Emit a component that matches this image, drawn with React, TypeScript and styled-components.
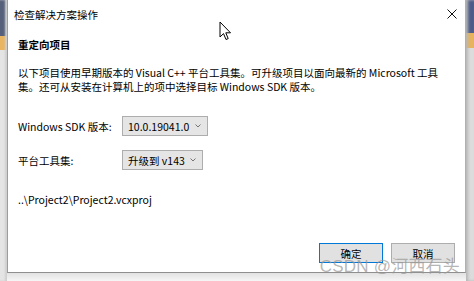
import React from 'react'
import styled, { createGlobalStyle } from 'styled-components'

const GlobalStyle = createGlobalStyle`
  html, body {
    margin: 0;
    padding: 0;
    background: #f2f2f2;
  }
  body {
    font-family: "Noto Sans CJK SC", "Noto Sans", sans-serif;
    color: #000;
  }
`

const Screen = styled('div')`
  position: relative;
  width: 474px;
  height: 281px;
  overflow: hidden;
  display: grid;
  grid-template-columns: 7px 459px 8px;
  grid-template-rows: 273px 8px;
  background: #f4f4f4;
`

const Strip = styled('div')<{ $side: 'left' | 'right' }>`
  grid-row: 1 / span 2;
  grid-column: ${(p) => (p.$side === 'left' ? 1 : 3)};
  background: ${(p) =>
    p.$side === 'left'
      ? 'linear-gradient(#56607a 0 36px, #e9b562 36px 50px, #e4e4e4 50px)'
      : 'linear-gradient(#4d5b88 0 33px, #e7b35c 33px 48px, #dcdcdc 48px)'};
  box-shadow: ${(p) =>
    p.$side === 'left' ? 'inset -2px 0 2px #cfcfcf' : 'inset 2px 0 3px #b8b8b8'};
`

const Dialog = styled('div')`
  grid-row: 1;
  grid-column: 2;
  min-width: 0;
  background: #fff;
  border-left: 1px solid #9c9c9c;
  border-right: 1px solid #b0b0b0;
  border-bottom: 1px solid #8f8f8f;
  display: flex;
  flex-direction: column;
  box-sizing: border-box;
`

const Shadow = styled('div')`
  grid-row: 2;
  grid-column: 2;
  background: linear-gradient(#e2e2e2, #f6f6f6);
`

const TitleBar = styled('div')`
  height: 28px;
  display: flex;
  align-items: center;
  justify-content: space-between;
  padding: 0 8px 0 6px;
  font-size: 10.5px;
`

const Body = styled('div')`
  flex: 1;
  display: flex;
  flex-direction: column;
  padding: 0 10px;
  font-size: 10.5px;
`

const Heading = styled('div')`
  margin-top: 9px;
  font-weight: 700;
  font-size: 10.5px;
  line-height: 16px;
`

const Paragraph = styled('p')`
  margin: 13px 0 0 0;
  line-height: 14px;
  white-space: nowrap;
`

const FieldRow = styled('div')<{ $top: number }>`
  margin-top: ${(p) => p.$top}px;
  display: flex;
  align-items: center;
`

const Label = styled('div')`
  width: 104px;
`

const Select = styled('div')<{ $width: number }>`
  width: ${(p) => p.$width}px;
  height: 20px;
  box-sizing: border-box;
  display: flex;
  align-items: center;
  justify-content: space-between;
  padding: 0 6px 0 5px;
  background: #e5e5e5;
  border: 1px solid #adadad;
  font-size: 10.5px;
`

const Chevron = styled('svg')`
  width: 6px;
  height: 4px;
`

const PathText = styled('div')`
  margin-top: 23px;
  line-height: 14px;
`

const Footer = styled('div')`
  margin-top: auto;
  padding-bottom: 9px;
  display: flex;
  justify-content: flex-end;
  gap: 8px;
`

const Button = styled('button')<{ $primary?: boolean }>`
  width: 64px;
  height: 20px;
  padding: 0;
  font-family: inherit;
  font-size: 10.5px;
  background: #e1e1e1;
  border: 1px solid ${(p) => (p.$primary ? '#0078d7' : '#adadad')};
  color: #000;
`

const Watermark = styled('div')`
  position: absolute;
  right: 14px;
  top: 252px;
  font-family: "Liberation Sans", "Noto Sans CJK SC", sans-serif;
  font-size: 17px;
  color: rgba(150, 150, 150, 0.7);
  letter-spacing: 0.2px;
`

const Cursor = styled('svg')`
  position: absolute;
  left: 219px;
  top: 21px;
  width: 13px;
  height: 20px;
`

function ChevronIcon() {
  return (
    <Chevron viewBox="0 0 6 4">
      <path d="M0.5 0.5 L3 3 L5.5 0.5" fill="none" stroke="#666" strokeWidth="0.9" />
    </Chevron>
  )
}

export default function App() {
  return (
    <Screen>
      <GlobalStyle />
      <Strip $side="left" />
      <Dialog>
        <TitleBar>
          <span>检查解决方案操作</span>
          <svg width="10" height="10" viewBox="0 0 10 10">
            <path d="M0.5 0.5 L9.5 9.5 M9.5 0.5 L0.5 9.5" stroke="#111" strokeWidth="1" />
          </svg>
        </TitleBar>
        <Body>
          <Heading>重定向项目</Heading>
          <Paragraph>
            以下项目使用早期版本的 Visual C++ 平台工具集。可升级项目以面向最新的 Microsoft 工具
            <br />
            集。还可从安装在计算机上的项中选择目标 Windows SDK 版本。
          </Paragraph>
          <FieldRow $top={22}>
            <Label>Windows SDK 版本:</Label>
            <Select $width={86}>
              <span>10.0.19041.0</span>
              <ChevronIcon />
            </Select>
          </FieldRow>
          <FieldRow $top={14}>
            <Label>平台工具集:</Label>
            <Select $width={81}>
              <span>升级到 v143</span>
              <ChevronIcon />
            </Select>
          </FieldRow>
          <PathText>..\Project2\Project2.vcxproj</PathText>
          <Footer>
            <Button $primary>确定</Button>
            <Button>取消</Button>
          </Footer>
        </Body>
      </Dialog>
      <Strip $side="right" />
      <Shadow />
      <Watermark>CSDN @河西石头</Watermark>
      <Cursor viewBox="0 0 13 20">
        <path
          d="M1 1 L1 16 L4.5 12.6 L7 18.5 L9.2 17.6 L6.8 11.8 L11.5 11.8 Z"
          fill="#fff"
          stroke="#000"
          strokeWidth="1"
          strokeLinejoin="round"
        />
      </Cursor>
    </Screen>
  )
}
